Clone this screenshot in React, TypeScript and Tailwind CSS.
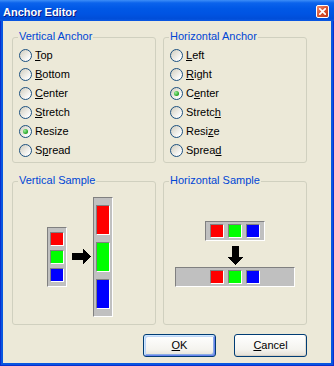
import React from 'react';

type Label = [string, string, string];

function Radio({ label, checked }: { label: Label; checked?: boolean }) {
  return (
    <div className="flex h-[19px] items-center">
      <span className="flex h-[13px] w-[13px] shrink-0 items-center justify-center rounded-full border border-[#1C5180] bg-[linear-gradient(135deg,#D6D3C6_10%,#FFFFFF_85%)]">
        {checked && (
          <span className="h-[5px] w-[5px] rounded-full bg-[radial-gradient(circle_at_35%_35%,#9CF09C,#21A121_70%)]" />
        )}
      </span>
      <span className="ml-[3px] text-[11px] leading-[13px] text-black">
        {label[0]}
        <span className="underline underline-offset-[1px]">{label[1]}</span>
        {label[2]}
      </span>
    </div>
  );
}

function Group({ title, h, children }: { title: string; h: string; children: React.ReactNode }) {
  return (
    <div className={`relative w-[144px] rounded-[3px] border border-[#D0D0BF] ${h}`}>
      <span className="absolute left-[5px] top-[-8px] bg-[#ECE9D8] px-[1px] text-[11px] leading-[13px] text-[#0046D5]">
        {title}
      </span>
      {children}
    </div>
  );
}

const cellBorder = 'border border-t-[#808080] border-l-[#808080] border-b-white border-r-white';

function Cells({ tall }: { tall?: boolean }) {
  const size = tall ? 'h-[30px] w-[14px]' : 'h-[14px] w-[14px]';
  return (
    <>
      <div className={`${size} ${cellBorder} bg-[#FF0000]`} />
      <div className={`${size} ${cellBorder} bg-[#00FF00]`} />
      <div className={`${size} ${cellBorder} bg-[#0000FF]`} />
    </>
  );
}

const vertical: Label[] = [
  ['', 'T', 'op'],
  ['', 'B', 'ottom'],
  ['', 'C', 'enter'],
  ['', 'S', 'tretch'],
  ['Resize', '', ''],
  ['S', 'p', 'read'],
];

const horizontal: Label[] = [
  ['', 'L', 'eft'],
  ['', 'R', 'ight'],
  ['C', 'e', 'nter'],
  ['Stretc', 'h', ''],
  ['Resi', 'z', 'e'],
  ['Sprea', 'd', ''],
];

export default function App() {
  return (
    <div className="flex h-[366px] w-[334px] flex-col border-x border-b border-[#0A2ECF] bg-[#0856E0] font-['Liberation_Sans',Arial,sans-serif]">
      {/* Title bar */}
      <div className="-mx-px flex h-[21px] shrink-0 items-center justify-between bg-[linear-gradient(to_bottom,#3D8EF7_0%,#0B63EC_14%,#0058E6_40%,#0054E3_65%,#004ED9_88%,#0A57E2_100%)] pl-[3px] pr-[5px]">
        <span className="pt-[3px] text-[11px] font-bold leading-[13px] text-white [text-shadow:1px_1px_0_#0A1883]">
          Anchor Editor
        </span>
        <span className="mt-[2px] flex h-[13px] w-[13px] items-center justify-center rounded-[2px] border border-white bg-[linear-gradient(135deg,#F08A6C,#D6502E_55%,#C23A1A)]">
          <svg width="7" height="7" viewBox="0 0 7 7">
            <path d="M0.8 0.8L6.2 6.2M6.2 0.8L0.8 6.2" stroke="#fff" strokeWidth="1.7" strokeLinecap="square" />
          </svg>
        </span>
      </div>

      {/* Client area */}
      <div className="mx-[2px] mb-[2px] flex flex-1 flex-col bg-[#ECE9D8] pl-[9px] pt-[16px]">
        <div className="flex gap-[7px]">
          <Group title="Vertical Anchor" h="h-[126px]">
            <div className="flex flex-col pl-[6px] pt-[8px]">
              {vertical.map((l, i) => (
                <Radio key={i} label={l} checked={i === 4} />
              ))}
            </div>
          </Group>
          <Group title="Horizontal Anchor" h="h-[126px]">
            <div className="flex flex-col pl-[6px] pt-[8px]">
              {horizontal.map((l, i) => (
                <Radio key={i} label={l} checked={i === 2} />
              ))}
            </div>
          </Group>
        </div>

        <div className="mt-[18px] flex gap-[7px]">
          <Group title="Vertical Sample" h="h-[144px]">
            <div className="flex h-full items-center justify-center pr-[8px] pt-[7px]">
              <div className={`flex flex-col gap-[4px] bg-[#C0C0C0] px-[2px] py-[4px] ${cellBorder}`}>
                <Cells />
              </div>
              <svg className="ml-[5px] mr-[2px]" width="19" height="15" viewBox="0 0 19 15" shapeRendering="crispEdges">
                <polygon points="0,4 11,4 11,0 19,7.5 11,15 11,11 0,11" fill="#000" />
              </svg>
              <div className={`flex flex-col gap-[7px] bg-[#C0C0C0] px-[2px] py-[7px] ${cellBorder}`}>
                <Cells tall />
              </div>
            </div>
          </Group>
          <Group title="Horizontal Sample" h="h-[144px]">
            <div className="flex h-full flex-col items-center justify-center pt-[1px]">
              <div className={`flex gap-[4px] bg-[#C0C0C0] px-[4px] py-[2px] ${cellBorder}`}>
                <Cells />
              </div>
              <svg className="mb-[2px] mt-[5px]" width="15" height="19" viewBox="0 0 15 19" shapeRendering="crispEdges">
                <polygon points="4,0 11,0 11,11 15,11 7.5,19 0,11 4,11" fill="#000" />
              </svg>
              <div className={`flex w-[120px] justify-center gap-[4px] bg-[#C0C0C0] py-[2px] ${cellBorder}`}>
                <Cells />
              </div>
            </div>
          </Group>
        </div>

        {/* Buttons */}
        <div className="mt-[9px] flex w-[295px] justify-end gap-[18px]">
          <button className="h-[23px] w-[73px] rounded-[3px] border border-[#003C74] bg-[linear-gradient(to_bottom,#FFFFFF,#F4F3EE_70%,#E3DFD5)] text-[11px] text-black shadow-[inset_1px_1px_0_#CEE7FF,inset_-1px_-1px_0_#6982EE,inset_2px_2px_0_#BCD4F6,inset_-2px_-2px_0_#89ADE4]">
            <span className="underline underline-offset-[1px]">O</span>K
          </button>
          <button className="h-[23px] w-[73px] rounded-[3px] border border-[#003C74] bg-[linear-gradient(to_bottom,#FFFFFF,#F4F3EE_70%,#E3DFD5)] text-[11px] text-black shadow-[inset_0_-1px_0_#D6D0C5,inset_-1px_0_0_#E2DED4]">
            <span className="underline underline-offset-[1px]">C</span>ancel
          </button>
        </div>
      </div>
    </div>
  );
}
